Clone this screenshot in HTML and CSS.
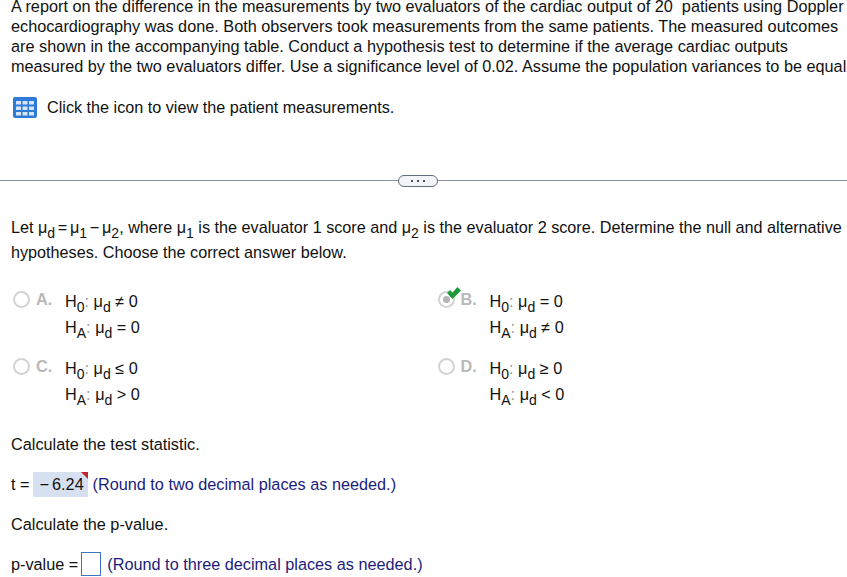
FILE: index.html
```html
<!DOCTYPE html>
<html lang="en">
<head>
  <meta charset="UTF-8" />
  <title>Hypothesis Test Question</title>
  <link rel="stylesheet" href="styles.css">
</head>
<body>

  <div class="stem">
    <div>A report on the difference in the measurements by two evaluators of the cardiac output of 20&nbsp; patients using Doppler</div>
    <div>echocardiography was done. Both observers took measurements from the same patients. The measured outcomes</div>
    <div>are shown in the accompanying table. Conduct a hypothesis test to determine if the average cardiac outputs</div>
    <div>measured by the two evaluators differ. Use a significance level of 0.02. Assume the population variances to be equal</div>
  </div>

  <div class="data-link">
    <svg class="table-icon" width="24" height="21" viewBox="0 0 24 21">
      <rect x="0" y="0" width="24" height="21" rx="2" fill="#2f7ad9"/>
      <g fill="#d5e6fb">
        <rect x="3" y="4" width="5" height="3.5"/>
        <rect x="9.5" y="4" width="5" height="3.5"/>
        <rect x="16" y="4" width="5" height="3.5"/>
        <rect x="3" y="9.5" width="5" height="3.5"/>
        <rect x="9.5" y="9.5" width="5" height="3.5"/>
        <rect x="16" y="9.5" width="5" height="3.5"/>
        <rect x="3" y="15" width="5" height="3.5"/>
        <rect x="9.5" y="15" width="5" height="3.5"/>
        <rect x="16" y="15" width="5" height="3.5"/>
      </g>
    </svg>
    <span>Click the icon to view the patient measurements.</span>
  </div>

  <div class="divider">
    <button class="more"><i></i><i></i><i></i></button>
  </div>

  <div class="prompt">
    <div>Let <span class="mu">μ<sub>d</sub></span> <span class="eq">=</span> <span class="mu">μ<sub>1</sub></span> <span class="eq">−</span> <span class="mu">μ<sub>2</sub></span>, where <span class="mu">μ<sub>1</sub></span> is the evaluator 1 score and <span class="mu">μ<sub>2</sub></span> is the evaluator 2 score. Determine the null and alternative</div>
    <div>hypotheses. Choose the correct answer below.</div>
  </div>

  <div class="choices">
    <div class="choice">
      <span class="radio"></span>
      <span class="letter">A.</span>
      <div class="hyp">
        <div>H<sub>0</sub><span class="colon">:</span> <span class="mu">μ<sub>d</sub></span> <span class="op">≠</span> 0</div>
        <div>H<sub>A</sub><span class="colon">:</span> <span class="mu">μ<sub>d</sub></span> <span class="op">=</span> 0</div>
      </div>
    </div>
    <div class="choice">
      <span class="radio selected">
        <svg class="check" width="14" height="12" viewBox="0 0 14 12"><path d="M0 6 L3 3 L5.5 5.5 L10.5 0 L14 3.5 L5.5 12 Z" fill="#1f9a3a"/></svg>
      </span>
      <span class="letter">B.</span>
      <div class="hyp">
        <div>H<sub>0</sub><span class="colon">:</span> <span class="mu">μ<sub>d</sub></span> <span class="op">=</span> 0</div>
        <div>H<sub>A</sub><span class="colon">:</span> <span class="mu">μ<sub>d</sub></span> <span class="op">≠</span> 0</div>
      </div>
    </div>
    <div class="choice">
      <span class="radio"></span>
      <span class="letter">C.</span>
      <div class="hyp">
        <div>H<sub>0</sub><span class="colon">:</span> <span class="mu">μ<sub>d</sub></span> <span class="op">≤</span> 0</div>
        <div>H<sub>A</sub><span class="colon">:</span> <span class="mu">μ<sub>d</sub></span> <span class="op">&gt;</span> 0</div>
      </div>
    </div>
    <div class="choice">
      <span class="radio"></span>
      <span class="letter">D.</span>
      <div class="hyp">
        <div>H<sub>0</sub><span class="colon">:</span> <span class="mu">μ<sub>d</sub></span> <span class="op">≥</span> 0</div>
        <div>H<sub>A</sub><span class="colon">:</span> <span class="mu">μ<sub>d</sub></span> <span class="op">&lt;</span> 0</div>
      </div>
    </div>
  </div>

  <div class="step">Calculate the test statistic.</div>

  <div class="answer t-row">
    <span>t =</span>
    <span class="filled">− 6.24</span>
    <span class="hint">(Round to two decimal places as needed.)</span>
  </div>

  <div class="step pvalue-label">Calculate the p-value.</div>

  <div class="answer p-row">
    <span>p-value =</span>
    <span class="blank"></span>
    <span class="hint">(Round to three decimal places as needed.)</span>
  </div>

</body>
</html>
```

FILE: styles.css
```css
html, body {
  margin: 0;
  height: 577px;
  overflow: hidden;
}
body {
  font-family: "Liberation Sans", Arial, sans-serif;
  font-size: 16.25px;
  line-height: 20px;
  color: #111;
  background: #fff;
  white-space: nowrap;
}
sub {
  font-size: 14px;
  line-height: 0;
  vertical-align: -5px;
}
.stem {
  padding-left: 11px;
}
.stem div:first-child {
  line-height: 12px;
  margin-bottom: 4px;
}
.data-link {
  display: flex;
  align-items: center;
  gap: 10px;
  margin-top: 19px;
  padding-left: 13px;
  height: 24px;
  font-size: 16.2px;
}
.table-icon {
  display: block;
}
.divider {
  position: relative;
  height: 1px;
  margin-top: 61px;
  background: #8a93a3;
}
.more {
  position: absolute;
  left: 398px;
  top: -5px;
  width: 40px;
  height: 12px;
  padding: 0;
  display: flex;
  align-items: center;
  justify-content: center;
  gap: 3.5px;
  background: #f2f4f7;
  border: 1px solid #626c7c;
  border-radius: 6px;
}
.more i {
  width: 2.5px;
  height: 2px;
  background: #4a5361;
}
.prompt {
  margin-top: 34px;
  padding-left: 11px;
  font-size: 16.2px;
  line-height: 25px;
}
.eq {
  margin: 0 -1.8px;
}
.choices {
  display: grid;
  grid-template-columns: 424.5px 1fr;
  row-gap: 27px;
  margin-top: 24px;
  padding-left: 13px;
}
.choice {
  display: flex;
  align-items: flex-start;
  height: 40px;
}
.radio {
  position: relative;
  box-sizing: border-box;
  width: 17px;
  height: 17px;
  margin-top: 2px;
  border: 2px solid #d3d3d3;
  border-radius: 50%;
  background: #fff;
}
.radio.selected::after {
  content: "";
  position: absolute;
  left: 3px;
  top: 3px;
  width: 7px;
  height: 7px;
  border-radius: 50%;
  background: #b5b5b5;
}
.check {
  position: absolute;
  left: 7px;
  top: -6px;
  z-index: 1;
}
.letter {
  width: 29px;
  margin-left: 6px;
  font-weight: bold;
  color: #b9b9b9;
}
.hyp {
  line-height: 26px;
  margin-top: -1px;
}
.colon {
  color: #999;
}
.step {
  padding-left: 11px;
  margin-top: 38px;
}
.answer {
  display: flex;
  align-items: center;
  padding-left: 11px;
}
.t-row {
  margin-top: 17px;
  height: 26px;
}
.filled {
  position: relative;
  box-sizing: border-box;
  width: 55px;
  height: 25px;
  margin-left: 3px;
  padding-left: 7px;
  line-height: 25px;
  word-spacing: -1.5px;
  background: #d6e0f0;
}
.filled::after {
  content: "";
  position: absolute;
  right: 0;
  top: 0;
  border-top: 7px solid #c0272d;
  border-left: 7px solid transparent;
}
.hint {
  margin-left: 5px;
  color: #1c1c7c;
}
.pvalue-label {
  margin-top: 17px;
}
.p-row {
  margin-top: 17px;
  height: 26px;
}
.blank {
  box-sizing: border-box;
  width: 20px;
  height: 24px;
  margin-left: 3px;
  margin-right: 1px;
  border: 1px solid #3f73c4;
  background: #fff;
}
```
